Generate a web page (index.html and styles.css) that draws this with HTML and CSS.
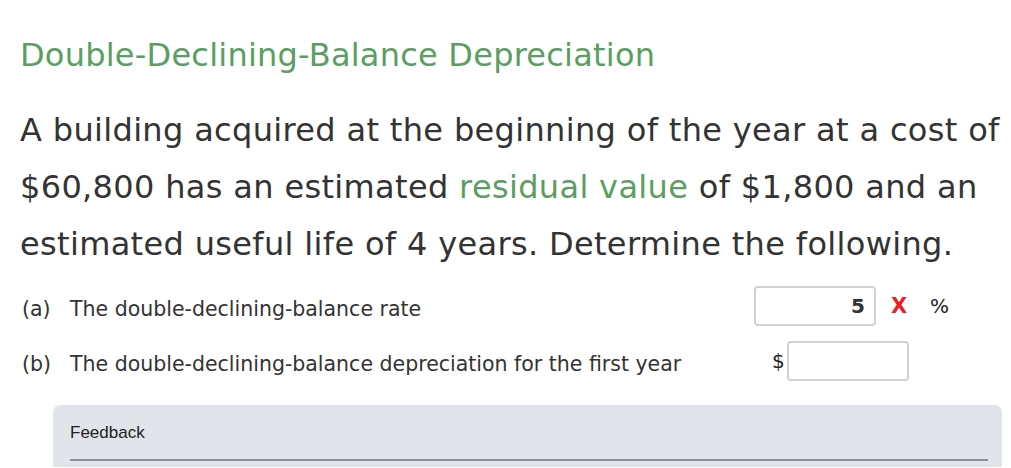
FILE: index.html
```html
<!DOCTYPE html>
<html>
<head>
<meta charset="utf-8">
<link rel="stylesheet" href="styles.css">
</head>
<body>
<div class="page">
  <h1 class="title">Double-Declining-Balance Depreciation</h1>
  <p class="intro">A building acquired at the beginning of the year at a cost of $60,800 has an estimated <span class="term">residual value</span> of $1,800 and an estimated useful life of 4 years. Determine the following.</p>
  <div class="items">
    <div class="item item-a">
      <span class="label">(a)</span>
      <span class="text">The double-declining-balance rate</span>
      <span class="answer">
        <span class="box filled">5</span>
        <span class="wrong">X</span>
        <span class="unit">%</span>
      </span>
    </div>
    <div class="item item-b">
      <span class="label">(b)</span>
      <span class="text">The double-declining-balance depreciation for the first year</span>
      <span class="answer">
        <span class="cur">$</span>
        <span class="box"></span>
      </span>
    </div>
  </div>
  <div class="feedback">
    <div class="fb-title">Feedback</div>
    <div class="fb-rule"></div>
  </div>
</div>
</body>
</html>
```

FILE: styles.css
```css
html, body { margin: 0; padding: 0; background: #fff; }
body { font-family: "DejaVu Sans", Verdana, sans-serif; color: #333; }
.page { padding: 0 0 0 20px; width: 1011px; box-sizing: border-box; }
.title {
  margin: 0;
  padding-top: 35px;
  font-weight: normal;
  font-size: 32px;
  letter-spacing: 0.23px;
  line-height: 40px;
  color: #5b9e61;
}
.intro {
  margin: 27px 0 0 0;
  font-size: 32px;
  letter-spacing: 0.34px;
  line-height: 57px;
  color: #333;
}
.term { color: #5b9e61; }
.items { margin-top: 5px; }
.item { display: flex; align-items: center; font-size: 20.5px; height: 55px; }
.label { width: 48px; padding-left: 2px; margin-top: 7px; }
.text { width: 670px; margin-top: 7px; }
.answer { display: flex; align-items: center; }
.item-a .answer { padding-left: 14px; }
.item-b .answer { padding-left: 32px; }
.box {
  display: inline-block;
  width: 122px; height: 40px;
  box-sizing: border-box;
  border: 2px solid #d2d2d2;
  border-radius: 4px;
  text-align: right;
  padding-right: 9px;
  font-weight: bold;
  font-size: 20px;
  line-height: 37px;
  color: #333;
}
.wrong { color: #ee1c25; font-weight: bold; font-size: 21px; margin-left: 15px; width: 39px; line-height: 40px; }
.unit { font-size: 20px; color: #222; }
.cur { font-size: 20px; margin-right: 2px; color: #222; }
.feedback {
  margin: 17px 9px 0 33px;
  background: #e1e5e9;
  border-radius: 7px 7px 0 0;
  padding: 18px 14px 0 17px;
  height: 62px;
  box-sizing: border-box;
  font-family: "Liberation Sans", Arial, sans-serif;
}
.fb-title { font-size: 17px; color: #222; line-height: 20px; }
.fb-rule { margin-top: 16px; height: 2px; background: #8c9095; }
```
